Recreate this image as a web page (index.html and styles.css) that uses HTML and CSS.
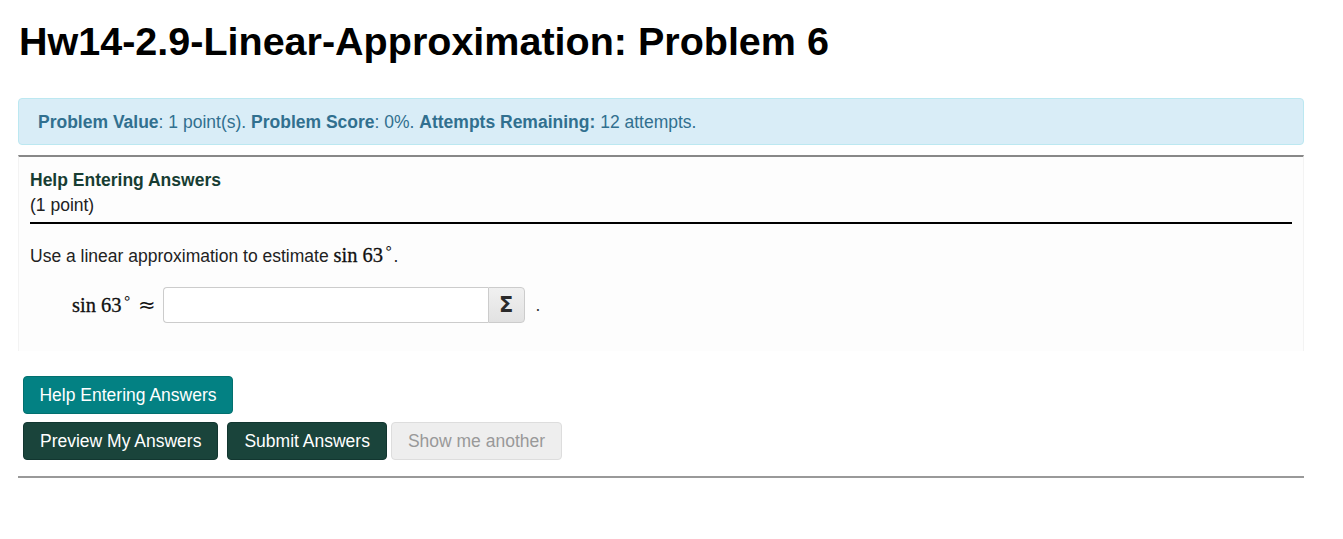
FILE: index.html
```html
<!DOCTYPE html>
<html lang="en">

<head>
    <meta charset="UTF-8">
    <meta name="viewport" content="width=device-width, initial-scale=1.0">
    <title>Hw14-2.9-Linear-Approximation: Problem 6</title>
    <link rel="stylesheet" href="styles.css">
</head>

<body>
    <div class="page">
        <h1 class="page-title">Hw14-2.9-Linear-Approximation: Problem 6</h1>

        <div class="alert-info">
            <strong>Problem Value</strong>: 1 point(s). <strong>Problem Score</strong>: 0%. <strong>Attempts Remaining:</strong> 12 attempts.
        </div>

        <div class="problem">
            <div class="problem-header">
                <div class="problem-name">Help Entering Answers</div>
                <div class="problem-points">(1 point)</div>
            </div>

            <div class="problem-text">
                Use a linear approximation to estimate <span class="math">sin 63<sup>&#8728;</sup></span>.
            </div>

            <div class="answer-row">
                <span class="math answer-label">sin 63<sup>&#8728;</sup><span class="approx">&asymp;</span></span>
                <div class="input-group">
                    <input type="text" class="answer-input">
                    <button class="eq-btn" type="button">&Sigma;</button>
                </div>
                <span class="dot">.</span>
            </div>
        </div>

        <div class="actions">
            <div class="btn-row">
                <button class="btn btn-help" type="button">Help Entering Answers</button>
            </div>
            <div class="btn-row">
                <button class="btn btn-dark" type="button">Preview My Answers</button>
                <button class="btn btn-dark" type="button">Submit Answers</button>
                <button class="btn btn-disabled" type="button" disabled>Show me another</button>
            </div>
        </div>
    </div>
</body>

</html>
```

FILE: styles.css
```css
body {
    margin: 0;
    font-family: "Liberation Sans", Arial, sans-serif;
    font-size: 17.5px;
    color: #222;
    background: white;
}

.page {
    padding: 0 39px 0 18px;
}

.page-title {
    margin: 0;
    padding: 19px 0 0 1px;
    height: 98px;
    box-sizing: border-box;
    font-size: 39.5px;
    font-weight: bold;
    color: #000;
}

.alert-info {
    background: #d9edf7;
    border: 1px solid #bce8f1;
    border-radius: 4px;
    color: #31708f;
    padding: 12px 19px;
    height: 47px;
    box-sizing: border-box;
    line-height: 22px;
}

.alert-info strong {
    color: #31708f;
}

.problem {
    margin-top: 10px;
    border-top: 2px solid #888;
    background: #fdfdfd;
    border-left: 1px solid #f3f3f3;
    border-right: 1px solid #f3f3f3;
    padding: 0 11px 0 11px;
    height: 196px;
    box-sizing: border-box;
}

.problem-header {
    padding-top: 11px;
    padding-bottom: 4px;
    border-bottom: 2px solid #000;
    line-height: 25px;
}

.problem-name {
    font-weight: bold;
    color: #173d33;
}

.problem-text {
    margin-top: 19px;
    line-height: 24px;
}

.math {
    font-family: "Liberation Serif", "DejaVu Serif", serif;
    font-size: 20.5px;
    color: #111;
    -webkit-text-stroke: 0.3px #111;
}

.math sup {
    font-family: "DejaVu Sans", sans-serif;
    font-size: 15px;
    vertical-align: 9px;
    line-height: 0;
    margin-left: 1px;
    -webkit-text-stroke: 0;
}

.answer-row {
    display: flex;
    align-items: center;
    margin-top: 19px;
    padding-left: 42px;
}

.answer-label {
    margin-right: 7px;
    white-space: nowrap;
}

.approx {
    font-family: "DejaVu Sans", sans-serif;
    font-size: 21px;
    margin-left: 6px;
    -webkit-text-stroke: 0;
}

.input-group {
    display: flex;
    height: 36px;
}

.answer-input {
    width: 325px;
    height: 36px;
    box-sizing: border-box;
    border: 1px solid #ccc;
    border-right: none;
    border-radius: 4px 0 0 4px;
    padding: 6px 12px;
    font-size: 16px;
    outline: none;
}

.eq-btn {
    width: 37px;
    height: 36px;
    border: 1px solid #ccc;
    border-radius: 0 4px 4px 0;
    background: linear-gradient(#f0f0f0, #e2e2e2);
    font-family: "DejaVu Sans", sans-serif;
    font-weight: bold;
    font-size: 21px;
    color: #2a2a2a;
    padding: 0;
}

.dot {
    margin-left: 11px;
    color: #333;
}

.actions {
    margin-top: 25px;
    padding: 0 0 16px 5px;
    border-bottom: 2px solid #999;
}

.btn-row {
    display: flex;
    gap: 8px;
    margin-bottom: 8px;
}

.btn-row:last-child {
    margin-bottom: 0;
}

.btn {
    font-family: "Liberation Sans", Arial, sans-serif;
    font-size: 17.5px;
    height: 38px;
    padding: 0 16px;
    border-radius: 4px;
    border: 1px solid transparent;
    color: white;
}

.btn-help {
    background: #038183;
    border-color: #02706f;
    width: 210px;
    padding: 0;
}

.btn-dark {
    background: #1a443b;
    border-color: #123630;
}

.btn-dark + .btn-dark {
    margin-left: 1px;
}

.btn-dark + .btn-disabled {
    margin-left: -4px;
}

.btn-disabled {
    background: #eee;
    border-color: #ddd;
    color: #999;
}
```
